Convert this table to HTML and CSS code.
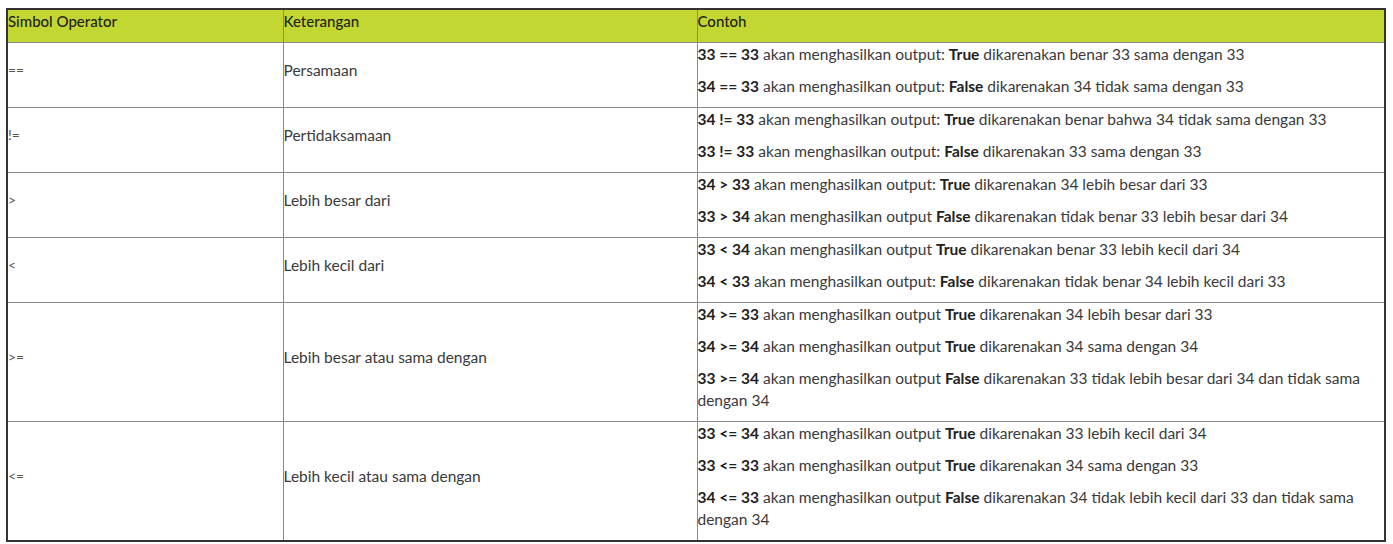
FILE: index.html
```html
<!DOCTYPE html>
<html lang="id">
<head>
<meta charset="utf-8">
<title>Operator Perbandingan</title>
<link rel="stylesheet" href="styles.css">
</head>
<body>
<div class="wrap">
<table class="ops">
  <colgroup>
    <col class="c1"><col class="c2"><col class="c3">
  </colgroup>
  <thead>
    <tr>
      <th><p>Simbol Operator</p></th>
      <th><p>Keterangan</p></th>
      <th><p>Contoh</p></th>
    </tr>
  </thead>
  <tbody>
    <tr>
      <td class="sym"><p>==</p></td>
      <td class="desc"><p>Persamaan</p></td>
      <td class="ex">
        <p><b>33 == 33</b> akan menghasilkan output: <b>True</b> dikarenakan benar 33 sama dengan 33</p>
        <p><b>34 == 33</b> akan menghasilkan output: <b>False</b> dikarenakan 34 tidak sama dengan 33</p>
      </td>
    </tr>
    <tr>
      <td class="sym"><p>!=</p></td>
      <td class="desc"><p>Pertidaksamaan</p></td>
      <td class="ex">
        <p><b>34 != 33</b> akan menghasilkan output: <b>True</b> dikarenakan benar bahwa 34 tidak sama dengan 33</p>
        <p><b>33 != 33</b> akan menghasilkan output: <b>False</b> dikarenakan 33 sama dengan 33</p>
      </td>
    </tr>
    <tr>
      <td class="sym"><p>&gt;</p></td>
      <td class="desc"><p>Lebih besar dari</p></td>
      <td class="ex">
        <p><b>34 &gt; 33</b> akan menghasilkan output: <b>True</b> dikarenakan 34 lebih besar dari 33</p>
        <p><b>33 &gt; 34</b> akan menghasilkan output <b>False</b> dikarenakan tidak benar 33 lebih besar dari 34</p>
      </td>
    </tr>
    <tr>
      <td class="sym"><p>&lt;</p></td>
      <td class="desc"><p>Lebih kecil dari</p></td>
      <td class="ex">
        <p><b>33 &lt; 34</b> akan menghasilkan output <b>True</b> dikarenakan benar 33 lebih kecil dari 34</p>
        <p><b>34 &lt; 33</b> akan menghasilkan output: <b>False</b> dikarenakan tidak benar 34 lebih kecil dari 33</p>
      </td>
    </tr>
    <tr>
      <td class="sym"><p>&gt;=</p></td>
      <td class="desc"><p>Lebih besar atau sama dengan</p></td>
      <td class="ex">
        <p><b>34 &gt;= 33</b> akan menghasilkan output <b>True</b> dikarenakan 34 lebih besar dari 33</p>
        <p><b>34 &gt;= 34</b> akan menghasilkan output <b>True</b> dikarenakan 34 sama dengan 34</p>
        <p><b>33 &gt;= 34</b> akan menghasilkan output <b>False</b> dikarenakan 33 tidak lebih besar dari 34 dan tidak sama dengan 34</p>
      </td>
    </tr>
    <tr>
      <td class="sym"><p>&lt;=</p></td>
      <td class="desc"><p>Lebih kecil atau sama dengan</p></td>
      <td class="ex">
        <p><b>33 &lt;= 34</b> akan menghasilkan output <b>True</b> dikarenakan 33 lebih kecil dari 34</p>
        <p><b>33 &lt;= 33</b> akan menghasilkan output <b>True</b> dikarenakan 34 sama dengan 33</p>
        <p><b>34 &lt;= 33</b> akan menghasilkan output <b>False</b> dikarenakan 34 tidak lebih kecil dari 33 dan tidak sama dengan 34</p>
      </td>
    </tr>
  </tbody>
</table>
</div>
</body>
</html>
```

FILE: styles.css
```css
html, body {
  margin: 0;
  padding: 0;
  background: #ffffff;
}
.wrap {
  padding: 8px 7px 0 6px;
}
.ops {
  width: 1380px;
  border-collapse: collapse;
  border: 2px solid #333333;
  font-family: Lato, "Open Sans", sans-serif;
  font-size: 15.5px;
  line-height: 22px;
  color: #3a3a3a;
}
.c1 { width: 276px; }
.c2 { width: 414px; }
.c3 { width: auto; }
.ops th,
.ops td {
  border: 1px solid #8a8a8a;
  padding: 0;
  text-align: left;
  vertical-align: middle;
}
.ops th {
  background: #c2d731;
  color: #222222;
  font-weight: 500;
  font-size: 15px;
}
.ops th p,
.ops td p {
  margin: 0 0 10px;
}
.ops td.sym {
  font-size: 14px;
  color: #555555;
}
.ops td.ex {
  vertical-align: top;
}
.ops b {
  font-weight: 700;
  color: #222222;
}
```
